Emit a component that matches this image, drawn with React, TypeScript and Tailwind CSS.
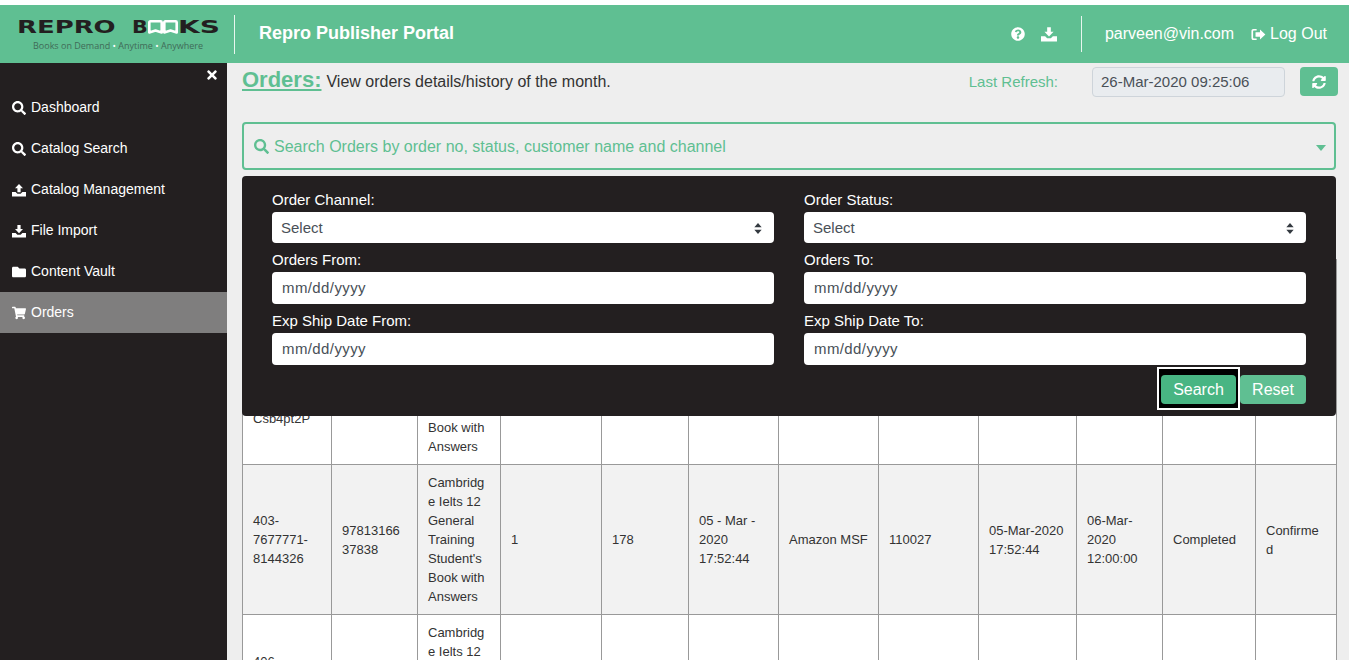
import { FaFolder, FaQuestionCircle, FaSearch, FaShoppingCart, FaSyncAlt, FaTimes } from "react-icons/fa";

// Tray icons (glyphicon upload / download style)
function TrayIcon({ dir, className }: { dir: "up" | "down"; className?: string }) {
  return (
    <svg viewBox="0 0 14 14" className={className} fill="currentColor">
      {dir === "up" ? (
        <path d="M7 1 L11 5.2 H8.6 V9.2 H5.4 V5.2 H3 Z" />
      ) : (
        <path d="M5.4 1 H8.6 V5 H11 L7 9.2 L3 5 H5.4 Z" />
      )}
      <path d="M0 9 H3.6 L5.4 10.8 H8.6 L10.4 9 H14 V13.6 H0 Z" />
    </svg>
  );
}

function LogOutIcon({ className }: { className?: string }) {
  return (
    <svg viewBox="0 0 16 14" className={className} fill="currentColor">
      <path d="M6 1 H2.6 C1.2 1 .4 1.9 .4 3.2 V10.8 C.4 12.1 1.2 13 2.6 13 H6 V11.2 H3 C2.5 11.2 2.2 10.9 2.2 10.4 V3.6 C2.2 3.1 2.5 2.8 3 2.8 H6 Z" />
      <path d="M9.6 1.6 L15.4 7 L9.6 12.4 V9.4 H4.8 V4.6 H9.6 Z" />
    </svg>
  );
}

// Open book mark used for the two O's of the logo
function BookMark() {
  return (
    <svg viewBox="0 0 15 14" className="h-[14px] w-[15px] shrink-0" fill="none" stroke="#ffffff" strokeWidth="2.6">
      <path d="M1.3 2.4 Q1.3 1.3 2.4 1.3 H12.6 Q13.7 1.3 13.7 2.4 V12.4 L7.5 10.6 L1.3 12.4 Z" strokeLinejoin="round" />
    </svg>
  );
}

const navItems = [
  { label: "Dashboard", icon: <FaSearch className="size-[14px]" /> },
  { label: "Catalog Search", icon: <FaSearch className="size-[14px]" /> },
  { label: "Catalog Management", icon: <TrayIcon dir="up" className="size-[14px]" /> },
  { label: "File Import", icon: <TrayIcon dir="down" className="size-[14px]" /> },
  { label: "Content Vault", icon: <FaFolder className="size-[14px]" /> },
  { label: "Orders", icon: <FaShoppingCart className="size-[14px]" />, active: true },
];

const title = "Cambridge Ielts 12 General Training Student's Book with Answers";

const headers = [
  "Order No",
  "ISBN",
  "Title",
  "Quantity",
  "Price",
  "Order Date",
  "Channel",
  "Customer",
  "Created Date",
  "Exp Ship Date",
  "Status",
  "Ack Status",
];

const rows = [
  ["S01-6521473-4420-Csb4pt2P", "9781316637838", title, "1", "178", "05 - Mar - 2020 17:40:12", "Amazon MSF", "110027", "05-Mar-2020 17:40:12", "06-Mar-2020 12:00:00", "Completed", "Confirmed"],
  ["403-7677771-8144326", "9781316637838", title, "1", "178", "05 - Mar - 2020 17:52:44", "Amazon MSF", "110027", "05-Mar-2020 17:52:44", "06-Mar-2020 12:00:00", "Completed", "Confirmed"],
  ["406-3318204-77519-09268", "9781316637838", title, "1", "178", "05 - Mar - 2020 18:03:27", "Amazon MSF", "110027", "05-Mar-2020 18:03:27", "06-Mar-2020 12:00:00", "Completed", "Confirmed"],
];

function Field({ label, placeholder }: { label: string; placeholder: string }) {
  return (
    <div className="h-[61px]">
      <label className="block h-[22px] pt-[1px] text-[15px] leading-[18px] text-white">{label}</label>
      <input
        readOnly
        placeholder={placeholder}
        className="h-[32px] w-full rounded-[4px] bg-white px-[10px] pb-[2px] text-[15px] tracking-[0.4px] text-[#495057] outline-none placeholder:text-[#495057]"
      />
    </div>
  );
}

function SelectField({ label }: { label: string }) {
  return (
    <div className="h-[60px]">
      <label className="block h-[22px] pt-[1px] text-[15px] leading-[18px] text-white">{label}</label>
      <div className="flex h-[31px] items-center justify-between rounded-[4px] bg-white pl-[9px] pr-[12px] pt-[1px] text-[15px] text-[#495057]">
        <span>Select</span>
        <svg viewBox="0 0 8 12" className="h-[11px] w-[8px]" fill="#343a40">
          <path d="M4 0 L8 4.6 H0 Z M4 12 L0 7.4 H8 Z" />
        </svg>
      </div>
    </div>
  );
}

export default function App() {
  return (
    <div className="flex h-screen flex-col overflow-hidden bg-white pt-[5px] font-['Liberation_Sans',Arial,sans-serif]">
      {/* Top bar */}
      <header className="flex h-[58px] shrink-0 items-center bg-[#5fbf92] text-white">
        <div className="flex h-[39px] w-[235px] shrink-0 flex-col border-r border-[#e8f6ef] pl-[17px]">
          <div className="flex h-[24px] items-center whitespace-nowrap font-['DejaVu_Sans',sans-serif] text-[18px] font-bold leading-none text-[#231f20]">
            <span className="inline-block w-[115px] origin-left scale-x-[1.44]">REPRO</span>
            <span className="inline-block w-[16px] origin-left scale-x-[1.15]">B</span>
            <BookMark />
            <BookMark />
            <span className="inline-block origin-left scale-x-[1.56]">KS</span>
          </div>
          <div className="ml-[16px] mt-[1px] whitespace-nowrap font-['Open_Sans',sans-serif] text-[9px] leading-[12px] text-[#3f6b58]">
            Books on Demand <span className="text-white">•</span> Anytime <span className="text-white">•</span> Anywhere
          </div>
        </div>
        <div className="ml-[24px] pb-[2px] text-[18px] font-bold">Repro Publisher Portal</div>
        <div className="ml-auto flex items-center">
          <FaQuestionCircle className="size-[14px]" />
          <TrayIcon dir="down" className="ml-[16px] size-[16px]" />
          <div className="ml-[24px] h-[36px] w-px bg-[#e8f6ef]" />
          <span className="ml-[23px] text-[16px]">parveen@vin.com</span>
          <LogOutIcon className="ml-[17px] h-[13px] w-[15px]" />
          <span className="ml-[4px] mr-[22px] text-[16px]">Log Out</span>
        </div>
      </header>

      <div className="flex min-h-0 flex-1">
        {/* Sidebar */}
        <aside className="w-[227px] shrink-0 bg-[#231f20] text-white">
          <div className="flex h-[24px] items-center justify-end pr-[8px]">
            <FaTimes className="size-[14px]" />
          </div>
          <nav>
            {navItems.map((item) => (
              <div
                key={item.label}
                className={`flex h-[41px] items-center gap-[5px] pl-[12px] text-[14px] ${item.active ? "bg-[#7f7e7e]" : ""}`}
              >
                {item.icon}
                <span>{item.label}</span>
              </div>
            ))}
          </nav>
        </aside>

        {/* Main content */}
        <main className="min-w-0 flex-1 overflow-hidden bg-[#eeeeee] pl-[15px] pr-[13px]">
          <div className="flex h-[59px] items-start">
            <div className="mt-[1px] flex items-baseline">
              <span className="text-[22px] font-bold leading-[32px] text-[#5fbf92] underline">Orders:</span>
              <span className="ml-[5px] text-[16px] text-[#333333]">View orders details/history of the month.</span>
            </div>
            <span className="ml-auto mt-[8px] text-[15px] text-[#5fbf92]">Last Refresh:</span>
            <div className="ml-[34px] mt-[4px] flex h-[30px] w-[193px] items-center rounded-[4px] border border-[#ced4da] bg-[#e9ecef] pl-[8px] text-[15px] text-[#495057]">
              26-Mar-2020 09:25:06
            </div>
            <button className="-mr-[2px] ml-[15px] mt-[4px] flex h-[29px] w-[38px] items-center justify-center rounded-[4px] bg-[#5fbf92] text-white">
              <FaSyncAlt className="size-[14px]" />
            </button>
          </div>

          <div className="relative">
            {/* Search toggle */}
            <div className="flex h-[48px] items-center rounded-[4px] border-2 border-[#5fbf92] pl-[10px] pr-[8px] pt-[1px] text-[16px] text-[#5fbf92]">
              <FaSearch className="size-[15px]" />
              <span className="ml-[5px]">Search Orders by order no, status, customer name and channel</span>
              <svg viewBox="0 0 10 6" className="ml-auto mt-[2px] h-[6px] w-[10px]" fill="currentColor">
                <path d="M0 0 H10 L5 6 Z" />
              </svg>
            </div>

            {/* Filter panel, open over the table */}
            <div className="absolute inset-x-0 top-full z-10 mt-[6px] h-[240px] rounded-[4px] bg-[#231f20] px-[30px] pt-[14px]">
              <div className="grid grid-cols-2 gap-x-[30px]">
                <SelectField label="Order Channel:" />
                <SelectField label="Order Status:" />
                <Field label="Orders From:" placeholder="mm/dd/yyyy" />
                <Field label="Orders To:" placeholder="mm/dd/yyyy" />
                <Field label="Exp Ship Date From:" placeholder="mm/dd/yyyy" />
                <Field label="Exp Ship Date To:" placeholder="mm/dd/yyyy" />
              </div>
              <div className="-mt-[5px] flex items-start justify-end text-[16px] text-white">
                {/* focus frame of the Search button */}
                <div className="flex h-[43px] w-[83px] items-start border-2 border-white bg-black pl-[2px] pt-[6px]">
                  <button className="h-[29px] w-[75px] shrink-0 rounded-[4px] bg-[#48b583]">Search</button>
                </div>
                <button className="mt-[8px] h-[29px] w-[66px] rounded-[4px] bg-[#5fbf92]">Reset</button>
              </div>
            </div>
          </div>

          {/* Orders table, mostly behind the panel */}
          <table className="mt-[89px] w-[1094px] table-fixed border-collapse text-[13px] leading-[19px] text-[#333333]">
            <colgroup>
              <col className="w-[89px]" />
              <col className="w-[86px]" />
              <col className="w-[83px]" />
              <col className="w-[101px]" />
              <col className="w-[87px]" />
              <col className="w-[90px]" />
              <col className="w-[100px]" />
              <col className="w-[100px]" />
              <col className="w-[98px]" />
              <col className="w-[86px]" />
              <col className="w-[93px]" />
              <col className="w-[81px]" />
            </colgroup>
            <thead>
              <tr className="h-[55px] bg-white">
                {headers.map((h) => (
                  <th key={h} className="border border-[#999999] px-[10px] text-left font-bold">
                    {h}
                  </th>
                ))}
              </tr>
            </thead>
            <tbody>
              {rows.map((row, i) => (
                <tr key={i} className={i % 2 === 0 ? "bg-white" : "bg-[#f2f2f2]"}>
                  {row.map((cell, j) => (
                    <td
                      key={j}
                      className={`border border-[#999999] py-[8px] pl-[10px] align-middle [overflow-wrap:break-word] ${j === 11 ? "pr-[12px]" : "pr-[10px]"}`}
                    >
                      {cell}
                    </td>
                  ))}
                </tr>
              ))}
            </tbody>
          </table>
        </main>
      </div>
    </div>
  );
}
